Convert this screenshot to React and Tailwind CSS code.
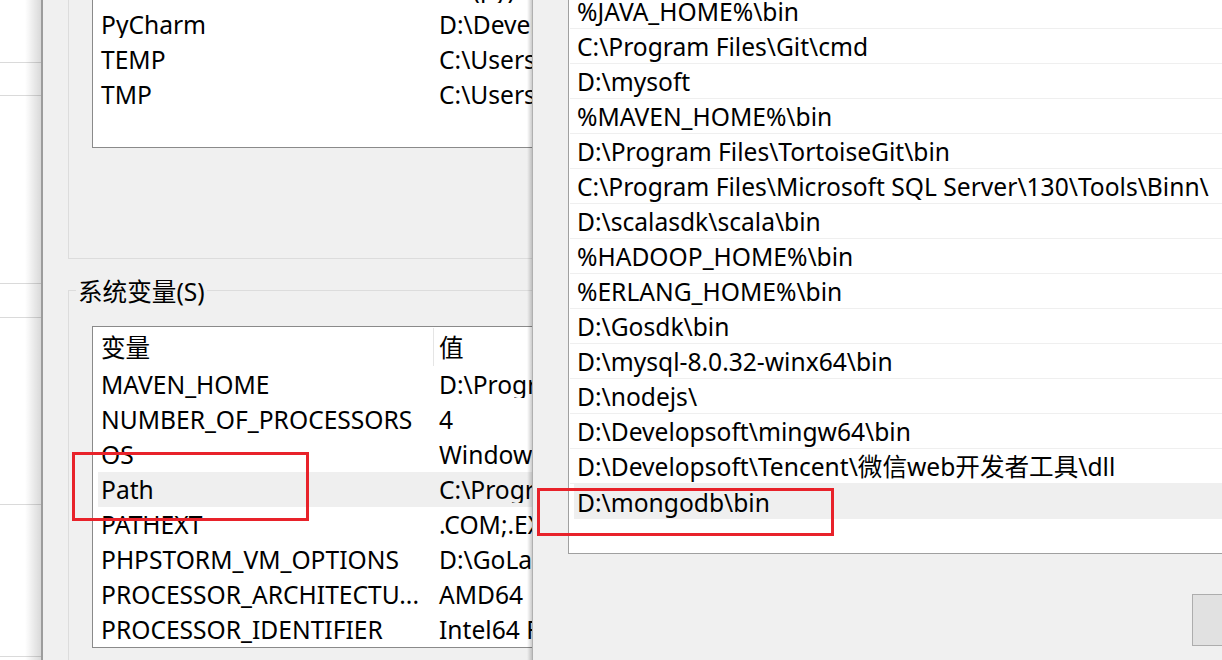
import React from "react";

const userVars = [
  ["Path", "D:\\(py)\\Scripts;%USERPROFILE%\\AppData"],
  ["PyCharm", "D:\\Developsoft\\PyCharm 2021.3\\bin;"],
  ["TEMP", "C:\\Users\\Administrator\\AppData\\Local\\Temp"],
  ["TMP", "C:\\Users\\Administrator\\AppData\\Local\\Temp"],
];

const sysVars = [
  ["MAVEN_HOME", "D:\\Program Files\\apache-maven-3.6.3"],
  ["NUMBER_OF_PROCESSORS", "4"],
  ["OS", "Windows_NT"],
  ["Path", "C:\\Program Files\\Common Files\\Oracle"],
  ["PATHEXT", ".COM;.EXE;.BAT;.CMD;.VBS"],
  ["PHPSTORM_VM_OPTIONS", "D:\\GoLand\\vmoptions"],
  ["PROCESSOR_ARCHITECTU...", "AMD64"],
  ["PROCESSOR_IDENTIFIER", "Intel64 Family 6 Model 158"],
];

const paths = [
  "%JAVA_HOME%\\bin",
  "C:\\Program Files\\Git\\cmd",
  "D:\\mysoft",
  "%MAVEN_HOME%\\bin",
  "D:\\Program Files\\TortoiseGit\\bin",
  "C:\\Program Files\\Microsoft SQL Server\\130\\Tools\\Binn\\",
  "D:\\scalasdk\\scala\\bin",
  "%HADOOP_HOME%\\bin",
  "%ERLANG_HOME%\\bin",
  "D:\\Gosdk\\bin",
  "D:\\mysql-8.0.32-winx64\\bin",
  "D:\\nodejs\\",
  "D:\\Developsoft\\mingw64\\bin",
  "D:\\Developsoft\\Tencent\\微信web开发者工具\\dll",
];

function VarRow({ name, value, selected }) {
  return (
    <div
      className={
        "ml-[5px] h-[35px] pt-[2px] grid grid-cols-[335px_1fr] items-center whitespace-nowrap " +
        (selected ? "bg-[#efefef]" : "")
      }
    >
      <div className="pl-[3px] overflow-hidden">{name}</div>
      <div className="pl-[6px] overflow-hidden">{value}</div>
    </div>
  );
}

export default function App() {
  return (
    <div className="relative w-[1222px] h-[660px] overflow-hidden flex bg-white text-black text-[24.6px] leading-none font-['Noto_Sans','Noto_Sans_CJK_SC',sans-serif]">
      {/* background window strip */}
      <div className="relative w-[41px] shrink-0 h-full bg-white flex flex-col">
        <div className="h-[62px]" />
        <div className="h-[33px] border-t border-[#dadada]" />
        <div className="h-[188px] border-t border-[#dadada]" />
        <div className="h-[34px] border-t border-[#dadada]" />
        <div className="h-[187px] border-t border-[#dadada]" />
        <div className="h-[152px] border-t border-[#dadada]" />
        <div className="flex-1 border-t border-[#dadada]" />
        <div className="absolute right-0 top-0 bottom-0 w-[16px] bg-gradient-to-r from-transparent to-black/15" />
      </div>

      {/* left dialog: environment variables */}
      <div className="relative w-[491px] shrink-0 h-full bg-[#f0f0f0] border-l-2 border-[#9c9c9c] overflow-hidden">
        <div className="w-[800px] pl-[25px]">
          {/* user variables group */}
          <div className="h-[259px] border-l border-b border-[#dcdcdc] pl-[23px]">
            <div className="h-[148px] bg-white border-l border-b border-[#8a8a8a] overflow-hidden">
              <div className="mt-[-28px]">
                {userVars.map(([n, v]) => (
                  <VarRow key={n} name={n} value={v} />
                ))}
              </div>
            </div>
          </div>

          {/* system variables group */}
          <div className="relative mt-[31px] h-[400px] border-l border-t border-[#dcdcdc] pl-[23px] pt-[35px]">
            <span className="absolute left-[7px] top-[-14px] px-[2px] bg-[#f0f0f0] leading-[30px]">
              系统变量(S)
            </span>
            <div className="h-[322px] bg-white border-l border-t border-b border-[#8a8a8a] overflow-hidden">
              <div className="h-[40px] grid grid-cols-[340px_1fr] whitespace-nowrap">
                <div className="pl-[8px] pt-[3px] flex items-center">变量</div>
                <div className="pl-[5px] pt-[3px] flex items-center border-l border-[#e5e5e5] my-px">值</div>
              </div>
              {sysVars.map(([n, v]) => (
                <VarRow key={n} name={n} value={v} selected={n === "Path"} />
              ))}
            </div>
          </div>
        </div>
      </div>

      {/* right dialog: edit path */}
      <div className="relative flex-1 h-full bg-[#f0f0f0] border-l border-[#b0b0b0] pl-[35px]">
        <div className="absolute left-[-6px] top-0 bottom-0 w-[5px] bg-gradient-to-r from-transparent to-black/20" />
        <div className="w-[700px]">
          <div className="h-[554px] bg-white border-l border-b border-[#a0a0a0] overflow-hidden">
            <div className="mt-[-6px] ml-px">
              {paths.map((p) => (
                <div
                  key={p}
                  className="h-[35px] border-b border-[#efefef] pl-[7px] pt-[3px] flex items-center whitespace-nowrap"
                >
                  {p}
                </div>
              ))}
              <div className="h-[35px] ml-[4px] bg-[#efefef] pl-[3px] pt-[3px] flex items-center whitespace-nowrap">
                D:\mongodb\bin
              </div>
            </div>
          </div>
          <div className="mt-[40px] ml-[624px] w-[80px] h-[52px] bg-[#e1e1e1] border border-[#adadad]" />
        </div>
      </div>

      {/* red annotation boxes */}
      <div className="absolute left-[72px] top-[452px] w-[237px] h-[69px] border-[3px] border-[#e8222a]" />
      <div className="absolute left-[537px] top-[488px] w-[297px] h-[48px] border-[3px] border-[#e8222a]" />
    </div>
  );
}
